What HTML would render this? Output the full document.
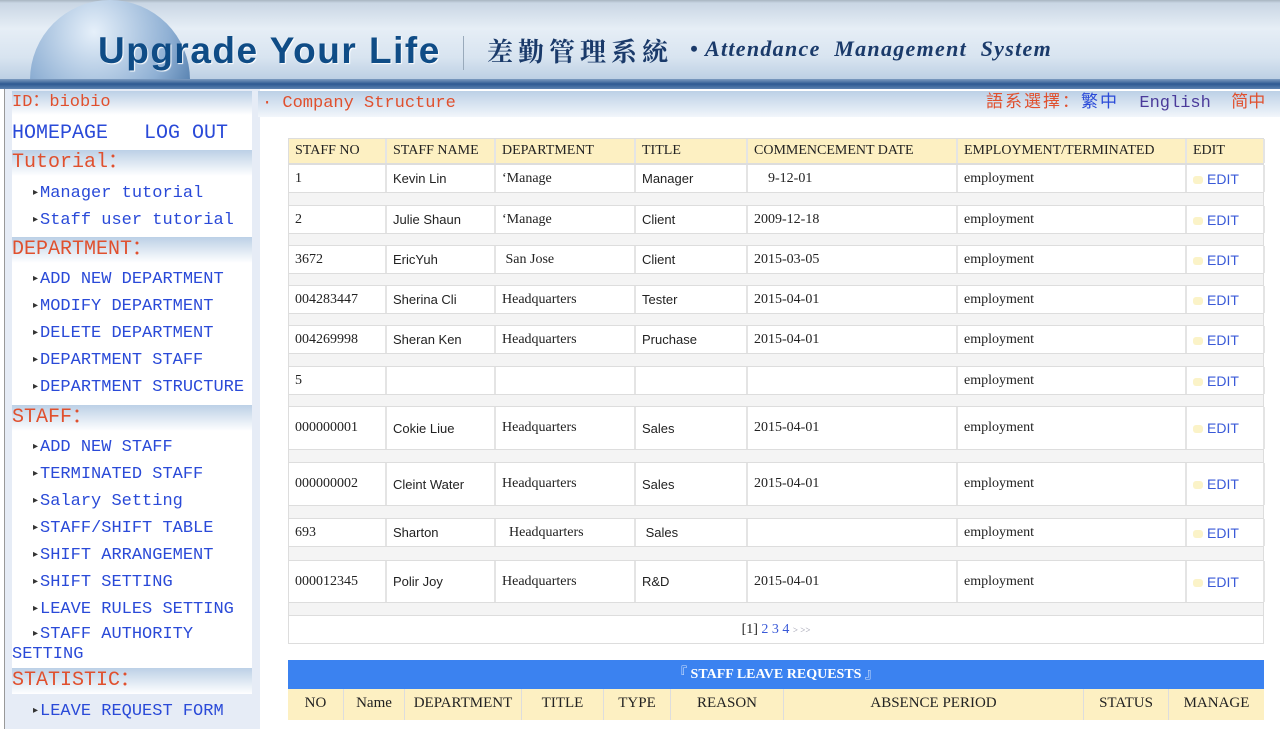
<!DOCTYPE html>
<html><head><meta charset="utf-8"><style>
*{margin:0;padding:0;box-sizing:border-box}
body{width:1280px;height:720px;overflow:hidden;background:#fff;position:relative;font-family:"Liberation Serif","Noto Serif CJK SC",serif}
.a{position:absolute}
#hdr{left:0;top:0;width:1280px;height:82px;background:linear-gradient(180deg,#a8b4c0 0px,#c9d6e4 3px,#e6eef6 35%,#d8e4f0 70%,#b9cde2 100%)}
#band{left:0;top:79px;width:1280px;height:10px;background:linear-gradient(180deg,#7d9cc0,#2e5a92 50%,#5c82b0)}
.mono{font-family:"Liberation Mono","Noto Sans CJK SC",monospace}
#side{left:4px;top:89px;width:256px;height:640px;background:#e6ecf6;border-left:1px solid #999}
.sec{position:absolute;left:12px;width:240px;background:linear-gradient(180deg,#bcd0e6,#ffffff);color:#e0502e;font-size:20px;line-height:26px}
.lnk{position:absolute;left:33px;color:#2a4ad8;font-size:17px;white-space:nowrap;line-height:20px}
.lnk:before{content:"▸";font-size:10px;color:#333;vertical-align:2px;margin-right:2px}
.wh{position:absolute;left:12px;width:240px;background:#fff}
#top2{left:258px;top:91px;width:1022px;height:26px;background:linear-gradient(180deg,#bcd0e6,#f2f6fb)}
.tb{position:absolute;left:288px;width:976px;border:1px solid #ddd;background:#fff}
.c{position:absolute;top:0;bottom:0;border-right:2px solid #e4e4e4;font-size:14px;color:#222;padding-left:6px;display:flex;align-items:center;white-space:nowrap}
.s{font-family:"Liberation Sans",sans-serif;font-size:13px}
.ed{color:#3a5ad8;font-family:"Liberation Sans",sans-serif;font-size:14px}
.ed:before{content:"";display:inline-block;width:10px;height:8px;background:#fbf3c8;border-radius:3px;margin-right:4px}
</style></head><body>
<div id="hdr" class="a"></div>
<div class="a" style="left:30px;top:0;width:160px;height:80px;border-radius:80px 80px 0 0;background:radial-gradient(circle at 40% 40%,#e6f0fa,#8fb0d4 70%,#5a84b2)"></div>
<div class="a" style="left:98px;top:30px;font-family:'Liberation Sans',sans-serif;font-weight:bold;font-size:37px;line-height:42px;letter-spacing:1.5px;color:#0f4c86;text-shadow:1px 1px 1px #fff">Upgrade Your Life</div>
<div class="a" style="left:463px;top:36px;width:1px;height:34px;background:#9ab"></div>
<div class="a" style="left:487px;top:34px;font-family:'Noto Serif CJK SC',serif;font-size:26px;line-height:34px;font-weight:bold;color:#1a3a6a;letter-spacing:5px">差勤管理系統</div>
<div class="a" style="left:690px;top:35px;font-family:'Liberation Serif',serif;font-style:italic;font-weight:bold;font-size:22px;line-height:28px;color:#1a3a6a;letter-spacing:1.3px">• Attendance&nbsp; Management&nbsp; System</div>
<div id="band" class="a"></div>
<div id="side" class="a mono"></div>
<div class="wh" style="top:91px;height:600px"></div>
<div class="sec mono" style="top:91px;height:24px;font-size:17px;line-height:24px">ID：biobio</div>
<div class="a mono" style="left:12px;top:122px;font-size:20px;line-height:24px;color:#2a4ad8">HOMEPAGE&nbsp;&nbsp;&nbsp;LOG OUT</div>
<div class="sec mono" style="top:150px">Tutorial：</div>
<div class="lnk mono" style="top:184px">Manager tutorial</div>
<div class="lnk mono" style="top:211px">Staff user tutorial</div>
<div class="sec mono" style="top:237px">DEPARTMENT：</div>
<div class="lnk mono" style="top:270px">ADD NEW DEPARTMENT</div>
<div class="lnk mono" style="top:297px">MODIFY DEPARTMENT</div>
<div class="lnk mono" style="top:324px">DELETE DEPARTMENT</div>
<div class="lnk mono" style="top:351px">DEPARTMENT STAFF</div>
<div class="lnk mono" style="top:378px">DEPARTMENT STRUCTURE</div>
<div class="sec mono" style="top:405px">STAFF：</div>
<div class="lnk mono" style="top:438px">ADD NEW STAFF</div>
<div class="lnk mono" style="top:465px">TERMINATED STAFF</div>
<div class="lnk mono" style="top:492px">Salary Setting</div>
<div class="lnk mono" style="top:519px">STAFF/SHIFT TABLE</div>
<div class="lnk mono" style="top:546px">SHIFT ARRANGEMENT</div>
<div class="lnk mono" style="top:573px">SHIFT SETTING</div>
<div class="lnk mono" style="top:600px">LEAVE RULES SETTING</div>
<div class="lnk mono" style="top:625px">STAFF AUTHORITY</div>
<div class="a mono" style="left:12px;top:645px;font-size:17px;line-height:20px;color:#2a4ad8">SETTING</div>
<div class="sec mono" style="top:668px">STATISTIC：</div>
<div class="lnk mono" style="top:702px">LEAVE REQUEST FORM</div>

<div id="top2" class="a"></div>
<div class="a mono" style="left:262px;top:94px;font-size:17px;line-height:20px;color:#e0502e">· Company Structure</div>
<div class="a mono" style="left:986px;top:94px;font-size:17px;line-height:20px;color:#e0502e;white-space:nowrap"><span style="letter-spacing:2px">語系選擇：</span><span style="color:#2a4ad8;letter-spacing:2px">繁中</span>&nbsp; <span style="color:#4a3a9a">English</span>&nbsp; 简中</div>

<div class="a" style="left:288px;top:138px;width:976px;height:506px;border:1px solid #ddd;background:#f4f4f4"></div>
<script>
var cols=[288,386,495,635,747,957,1186,1264];
function row(top,h,vals,bg,cls){
 var d=document.createElement('div');d.className='tb';d.style.top=top+'px';d.style.height=h+'px';if(bg)d.style.background=bg;
 var s='';for(var i=0;i<7;i++){s+='<div class="c '+(cls&&cls[i]||'')+'" style="left:'+(cols[i]-288)+'px;width:'+(cols[i+1]-cols[i])+'px">'+vals[i]+'</div>';}
 d.innerHTML=s;document.body.appendChild(d);
}
row(138,26,['STAFF NO','STAFF NAME','DEPARTMENT','TITLE','COMMENCEMENT DATE','EMPLOYMENT/TERMINATED','EDIT'],'#fdf0c2');
var R=[[164,29,['1','Kevin Lin','‘Manage','Manager','\u00a0\u00a0\u00a0\u00a09-12-01','employment','<span class=ed>EDIT</span>']],
[205,29,['2','Julie Shaun','‘Manage','Client','2009-12-18','employment','<span class=ed>EDIT</span>']],
[245,29,['3672','EricYuh','\u00a0San Jose','Client','2015-03-05','employment','<span class=ed>EDIT</span>']],
[285,29,['004283447','Sherina Cli','Headquarters','Tester','2015-04-01','employment','<span class=ed>EDIT</span>']],
[325,29,['004269998','Sheran Ken','Headquarters','Pruchase','2015-04-01','employment','<span class=ed>EDIT</span>']],
[366,29,['5','','','','','employment','<span class=ed>EDIT</span>']],
[406,44,['000000001','Cokie Liue','Headquarters','Sales','2015-04-01','employment','<span class=ed>EDIT</span>']],
[462,44,['000000002','Cleint Water','Headquarters','Sales','2015-04-01','employment','<span class=ed>EDIT</span>']],
[518,29,['693','Sharton','\u00a0\u00a0Headquarters','\u00a0Sales','','employment','<span class=ed>EDIT</span>']],
[560,43,['000012345','Polir Joy','Headquarters','R&amp;D','2015-04-01','employment','<span class=ed>EDIT</span>']]];
R.forEach(function(r){row(r[0],r[1],r[2],null,['','s','','s','','','']);});
var p=document.createElement('div');p.className='tb';p.style.top='615px';p.style.height='29px';
p.innerHTML='<div style="text-align:center;line-height:27px;font-size:14px;color:#222">[1] <span style="color:#3a5ad8">2 3 4</span> <span style="color:#99a;font-size:9px">&gt; &gt;&gt;</span></div>';
document.body.appendChild(p);
</script>
<div class="a" style="left:288px;top:660px;width:976px;height:29px;background:#3b82f0;color:#fff;font-weight:bold;font-size:14px;text-align:center;line-height:29px">『 STAFF LEAVE REQUESTS 』</div>
<div class="a" style="left:288px;top:689px;width:976px;height:31px;background:#fdf0c2;display:flex;font-size:15px;color:#222">
<div style="width:56px;text-align:center;line-height:28px;border-right:1px solid #ddd">NO</div>
<div style="width:61px;text-align:center;line-height:28px;border-right:1px solid #ddd">Name</div>
<div style="width:117px;text-align:center;line-height:28px;border-right:1px solid #ddd">DEPARTMENT</div>
<div style="width:82px;text-align:center;line-height:28px;border-right:1px solid #ddd">TITLE</div>
<div style="width:67px;text-align:center;line-height:28px;border-right:1px solid #ddd">TYPE</div>
<div style="width:113px;text-align:center;line-height:28px;border-right:1px solid #ddd">REASON</div>
<div style="width:300px;text-align:center;line-height:28px;border-right:1px solid #ddd">ABSENCE PERIOD</div>
<div style="width:85px;text-align:center;line-height:28px;border-right:1px solid #ddd">STATUS</div>
<div style="flex:1;text-align:center;line-height:28px">MANAGE</div>
</div>
</body></html>
